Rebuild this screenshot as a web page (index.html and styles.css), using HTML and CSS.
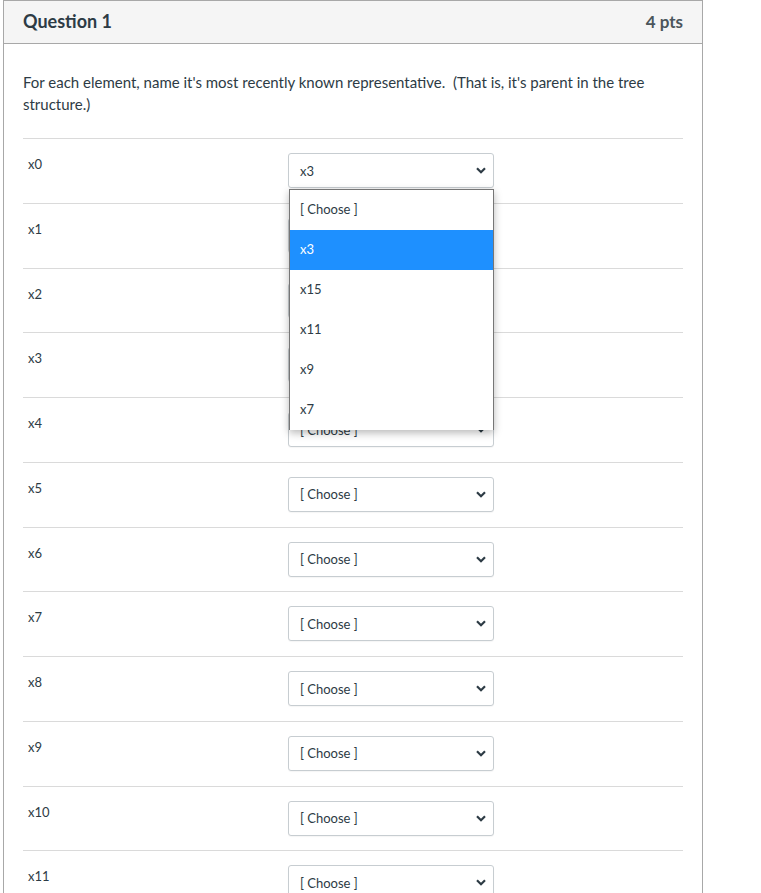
FILE: index.html
```html
<!DOCTYPE html>
<html lang="en">
<head>
<meta charset="utf-8">
<title>Question 1</title>
<link rel="stylesheet" href="styles.css">
</head>
<body>
<div class="card">
  <div class="card-header">
    <span class="q-title">Question 1</span>
    <span class="q-pts">4 pts</span>
  </div>
  <div class="card-body">
    <p class="q-text">For each element, name it's most recently known representative.&nbsp; (That is, it's parent in the tree structure.)</p>
    <div class="rows">
      <div class="row">
        <div class="label">x0</div>
        <div class="select-wrap">
          <div class="select"><span>x3</span><svg class="chev" width="10" height="7" viewBox="0 0 10 7"><path d="M1 1.2 L5 5.2 L9 1.2" fill="none" stroke="#2d3b45" stroke-width="2.2"/></svg></div>
          <ul class="menu">
            <li class="opt">[ Choose ]</li>
            <li class="opt active">x3</li>
            <li class="opt">x15</li>
            <li class="opt">x11</li>
            <li class="opt">x9</li>
            <li class="opt">x7</li>
          </ul>
        </div>
      </div>
      <div class="row"><div class="label">x1</div><div class="select-wrap"><div class="select"><span>[ Choose ]</span><svg class="chev" width="10" height="7" viewBox="0 0 10 7"><path d="M1 1.2 L5 5.2 L9 1.2" fill="none" stroke="#2d3b45" stroke-width="2.2"/></svg></div></div></div>
      <div class="row"><div class="label">x2</div><div class="select-wrap"><div class="select"><span>[ Choose ]</span><svg class="chev" width="10" height="7" viewBox="0 0 10 7"><path d="M1 1.2 L5 5.2 L9 1.2" fill="none" stroke="#2d3b45" stroke-width="2.2"/></svg></div></div></div>
      <div class="row"><div class="label">x3</div><div class="select-wrap"><div class="select"><span>[ Choose ]</span><svg class="chev" width="10" height="7" viewBox="0 0 10 7"><path d="M1 1.2 L5 5.2 L9 1.2" fill="none" stroke="#2d3b45" stroke-width="2.2"/></svg></div></div></div>
      <div class="row"><div class="label">x4</div><div class="select-wrap"><div class="select"><span>[ Choose ]</span><svg class="chev" width="10" height="7" viewBox="0 0 10 7"><path d="M1 1.2 L5 5.2 L9 1.2" fill="none" stroke="#2d3b45" stroke-width="2.2"/></svg></div></div></div>
      <div class="row"><div class="label">x5</div><div class="select-wrap"><div class="select"><span>[ Choose ]</span><svg class="chev" width="10" height="7" viewBox="0 0 10 7"><path d="M1 1.2 L5 5.2 L9 1.2" fill="none" stroke="#2d3b45" stroke-width="2.2"/></svg></div></div></div>
      <div class="row"><div class="label">x6</div><div class="select-wrap"><div class="select"><span>[ Choose ]</span><svg class="chev" width="10" height="7" viewBox="0 0 10 7"><path d="M1 1.2 L5 5.2 L9 1.2" fill="none" stroke="#2d3b45" stroke-width="2.2"/></svg></div></div></div>
      <div class="row"><div class="label">x7</div><div class="select-wrap"><div class="select"><span>[ Choose ]</span><svg class="chev" width="10" height="7" viewBox="0 0 10 7"><path d="M1 1.2 L5 5.2 L9 1.2" fill="none" stroke="#2d3b45" stroke-width="2.2"/></svg></div></div></div>
      <div class="row"><div class="label">x8</div><div class="select-wrap"><div class="select"><span>[ Choose ]</span><svg class="chev" width="10" height="7" viewBox="0 0 10 7"><path d="M1 1.2 L5 5.2 L9 1.2" fill="none" stroke="#2d3b45" stroke-width="2.2"/></svg></div></div></div>
      <div class="row"><div class="label">x9</div><div class="select-wrap"><div class="select"><span>[ Choose ]</span><svg class="chev" width="10" height="7" viewBox="0 0 10 7"><path d="M1 1.2 L5 5.2 L9 1.2" fill="none" stroke="#2d3b45" stroke-width="2.2"/></svg></div></div></div>
      <div class="row"><div class="label">x10</div><div class="select-wrap"><div class="select"><span>[ Choose ]</span><svg class="chev" width="10" height="7" viewBox="0 0 10 7"><path d="M1 1.2 L5 5.2 L9 1.2" fill="none" stroke="#2d3b45" stroke-width="2.2"/></svg></div></div></div>
      <div class="row"><div class="label">x11</div><div class="select-wrap"><div class="select"><span>[ Choose ]</span><svg class="chev" width="10" height="7" viewBox="0 0 10 7"><path d="M1 1.2 L5 5.2 L9 1.2" fill="none" stroke="#2d3b45" stroke-width="2.2"/></svg></div></div></div>
    </div>
  </div>
</div>
</body>
</html>
```

FILE: styles.css
```css
html, body {
  margin: 0;
  padding: 0;
  background: #ffffff;
}
body {
  font-family: Lato, "Liberation Sans", sans-serif;
  color: #2d3b45;
  height: 893px;
  overflow: hidden;
}
.card {
  margin-left: 3px;
  width: 700px;
  box-sizing: border-box;
  border: 1px solid #a8a8a8;
  border-bottom: none;
}
.card-header {
  height: 43px;
  box-sizing: border-box;
  background: #f5f5f5;
  border-bottom: 1px solid #a8a8a8;
  display: flex;
  align-items: center;
  justify-content: space-between;
  padding: 0 19px 2px 19px;
}
.q-title {
  font-size: 18px;
  font-weight: 700;
}
.q-pts {
  font-size: 17px;
  font-weight: 700;
  color: #4b555c;
}
.card-body {
  padding: 27px 19px 0 19px;
}
.q-text {
  margin: 0 0 23px 0;
  font-size: 15px;
  line-height: 22px;
}
.rows {
  display: flex;
  flex-direction: column;
}
.row {
  display: grid;
  grid-template-columns: 265px 206px;
  border-top: 1px solid #dadada;
  padding: 14px 0 14.75px 0;
  height: 35px;
}
.label {
  padding: 2px 0 0 5px;
  font-size: 13px;
  line-height: 18px;
}
.select-wrap {
  position: relative;
}
.select {
  height: 35px;
  box-sizing: border-box;
  border: 1px solid #c7cdd1;
  border-radius: 3px;
  background: #fff;
  box-shadow: 0 1px 1px rgba(0,0,0,0.04);
  display: flex;
  align-items: center;
  justify-content: space-between;
  padding: 0 7px 0 11px;
  font-size: 13px;
}
.chev {
  display: block;
}
.menu {
  position: absolute;
  top: 36px;
  left: 1px;
  right: 0;
  margin: 0;
  padding: 0;
  list-style: none;
  background: #fff;
  border: 1px solid #767676;
  border-bottom: none;
  box-shadow: 0 3px 8px rgba(0,0,0,0.28);
  z-index: 5;
}
.opt {
  height: 40px;
  box-sizing: border-box;
  display: flex;
  align-items: center;
  padding: 0 0 3px 10px;
  font-size: 13px;
}
.opt.active {
  background: #1e90ff;
  color: #ffffff;
}
```
